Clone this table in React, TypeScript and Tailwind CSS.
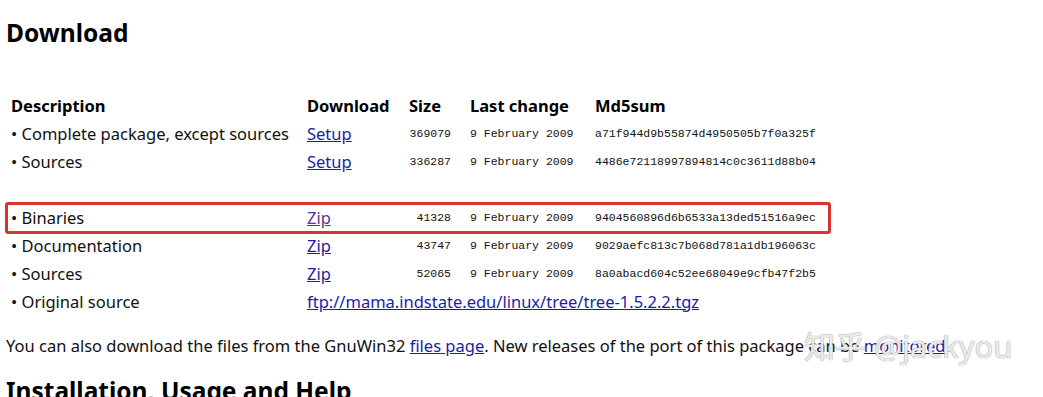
const rows = [
  { desc: "Complete package, except sources", link: "Setup", size: "369079", md5: "a71f944d9b55874d4950505b7f0a325f" },
  { desc: "Sources", link: "Setup", size: "336287", md5: "4486e72118997894814c0c3611d88b04" },
  null,
  { desc: "Binaries", link: "Zip", size: "41328", md5: "9404560896d6b6533a13ded51516a9ec", visited: true },
  { desc: "Documentation", link: "Zip", size: "43747", md5: "9029aefc813c7b068d781a1db196063c" },
  { desc: "Sources", link: "Zip", size: "52065", md5: "8a0abacd604c52ee68049e9cfb47f2b5" },
];

const cols = "grid grid-cols-[296px_102px_61px_125px_1fr] items-center h-[28px]";

export default function App() {
  return (
    <div className="relative h-[397px] w-[1043px] overflow-hidden bg-white text-[16.5px] text-[#111] font-['Noto_Sans',sans-serif]">
      <div className="px-[6px]">
        <h1 className="pt-[16px] text-[24.5px] font-bold leading-[34px] text-black">Download</h1>

        <div className="mt-[42px] pl-[5px]">
          <div className={`${cols} font-bold text-black`}>
            <span>Description</span>
            <span>Download</span>
            <span>Size</span>
            <span>Last change</span>
            <span>Md5sum</span>
          </div>
          {rows.map((r, i) =>
            r ? (
              <div key={i} className={cols}>
                <span>• {r.desc}</span>
                <span>
                  <a className={`underline ${r.visited ? "text-[#5a3290]" : "text-[#1c1ca8]"}`}>{r.link}</a>
                </span>
                <span className="pr-[19px] text-right font-['Liberation_Mono',monospace] text-[11.5px]">{r.size}</span>
                <span className="font-['Liberation_Mono',monospace] text-[11.5px]">9 February 2009</span>
                <span className="font-['Liberation_Mono',monospace] text-[11.5px]">{r.md5}</span>
              </div>
            ) : (
              <div key={i} className="h-[28px]" />
            )
          )}
          <div className={cols}>
            <span>• Original source</span>
            <span className="col-span-4">
              <a className="underline text-[#1c1ca8]">ftp://mama.indstate.edu/linux/tree/tree-1.5.2.2.tgz</a>
            </span>
          </div>
        </div>

        <p className="mt-[16px] leading-[28px]">
          You can also download the files from the GnuWin32{" "}
          <a className="underline text-[#1c1ca8]">files page</a>. New releases of the port of this package can be{" "}
          <a className="underline text-[#1c1ca8]">monitored</a>.
        </p>

        <h2 className="mt-[14px] text-[24.5px] font-bold leading-[34px] text-black">Installation, Usage and Help</h2>
      </div>

      <div className="pointer-events-none absolute left-[5px] top-[202px] h-[32px] w-[826px] rounded-[3px] border-[3px] border-[#d8342e]" />

      <div className="pointer-events-none absolute left-[804px] top-[326px] text-[31px] leading-[40px] text-white/80 font-['Noto_Sans','Noto_Sans_CJK_SC',sans-serif] [text-shadow:0_0_1px_#999,0_0_1px_#999]">
        知乎 @jackyou
      </div>
    </div>
  );
}
